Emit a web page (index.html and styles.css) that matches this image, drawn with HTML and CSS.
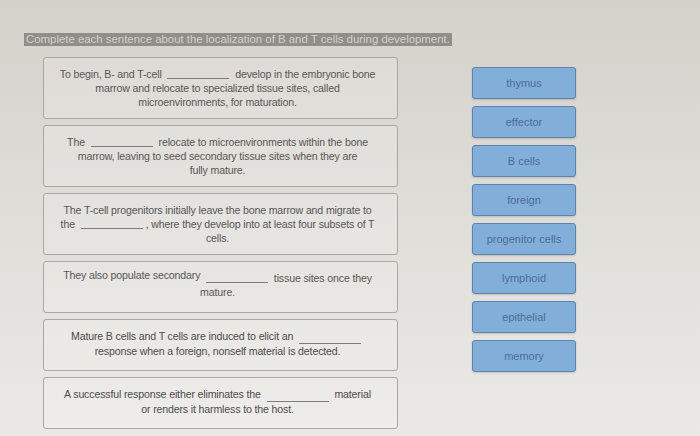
FILE: index.html
```html
<!DOCTYPE html>
<html lang="en">
<head>
  <meta charset="UTF-8" />
  <title>Localization of B and T cells</title>
  <link rel="stylesheet" href="styles.css">
</head>
<body>

  <div class="title">Complete each sentence about the localization of B and T cells during development.</div>

  <div class="board">
    <div class="sentences">
      <div class="sentence">
        To begin, B- and T-cell <span class="blank"></span> develop in the embryonic bone<br>
        marrow and relocate to specialized tissue sites, called<br>
        microenvironments, for maturation.
      </div>
      <div class="sentence">
        The <span class="blank"></span> relocate to microenvironments within the bone<br>
        marrow, leaving to seed secondary tissue sites when they are<br>
        fully mature.
      </div>
      <div class="sentence">
        The T-cell progenitors initially leave the bone marrow and migrate to<br>
        the <span class="blank"></span>, where they develop into at least four subsets of T<br>
        cells.
      </div>
      <div class="sentence">
        <span class="raised">They also populate secondary</span> <span class="blank"></span> tissue sites once they<br>
        mature.
      </div>
      <div class="sentence dark">
        Mature B cells and T cells are induced to elicit an <span class="blank low"></span><br>
        response when a foreign, nonself material is detected.
      </div>
      <div class="sentence dark">
        A successful response either eliminates the <span class="blank low"></span> material<br>
        or renders it harmless to the host.
      </div>
    </div>

    <div class="bank">
      <div class="chip">thymus</div>
      <div class="chip">effector</div>
      <div class="chip">B cells</div>
      <div class="chip">foreign</div>
      <div class="chip">progenitor cells</div>
      <div class="chip">lymphoid</div>
      <div class="chip">epithelial</div>
      <div class="chip">memory</div>
    </div>
  </div>

</body>
</html>
```

FILE: styles.css
```css
body {
  margin: 0;
  padding: 33px 0 0 24px;
  height: 436px;
  box-sizing: border-box;
  font-family: "Liberation Sans", Arial, sans-serif;
  background: linear-gradient(#d4d1cb, #e2e0db 60%, #ebe9e6);
  color: #575755;
  overflow: hidden;
}
.title {
  width: max-content;
  background: #8f8e89;
  color: #d2d1cc;
  font-size: 11.4px;
  line-height: 13px;
  padding: 0 2px;
}
.board {
  display: flex;
  margin-top: 11px;
  padding-left: 19px;
}
.sentences {
  width: 355px;
  display: flex;
  flex-direction: column;
  gap: 6px;
}
.sentence {
  min-height: 32px;
  border: 1px solid #a9a7a2;
  border-radius: 3px;
  background: rgba(255,255,255,0.18);
  padding: 9px 6px 9px 0;
  font-size: 10.6px;
  letter-spacing: -0.15px;
  line-height: 14px;
  text-align: center;
}
.sentence.dark {
  color: #4c4c4a;
}
.blank {
  display: inline-block;
  width: 62px;
  height: 10px;
  border-bottom: 1px solid #7d7c79;
  margin: 0 3px;
  vertical-align: -1px;
}
.blank.low {
  vertical-align: -4px;
}
.raised {
  position: relative;
  top: -3px;
}
.bank {
  width: 104px;
  margin: 10px 0 0 74px;
  display: flex;
  flex-direction: column;
  gap: 7px;
}
.chip {
  height: 32px;
  box-sizing: border-box;
  display: flex;
  align-items: center;
  justify-content: center;
  background: #82afda;
  border: 1px solid #5e83ad;
  border-radius: 3px;
  box-shadow: 0 1px 2px rgba(0,0,0,0.15);
  color: #4d6d92;
  font-size: 11px;
}
```
